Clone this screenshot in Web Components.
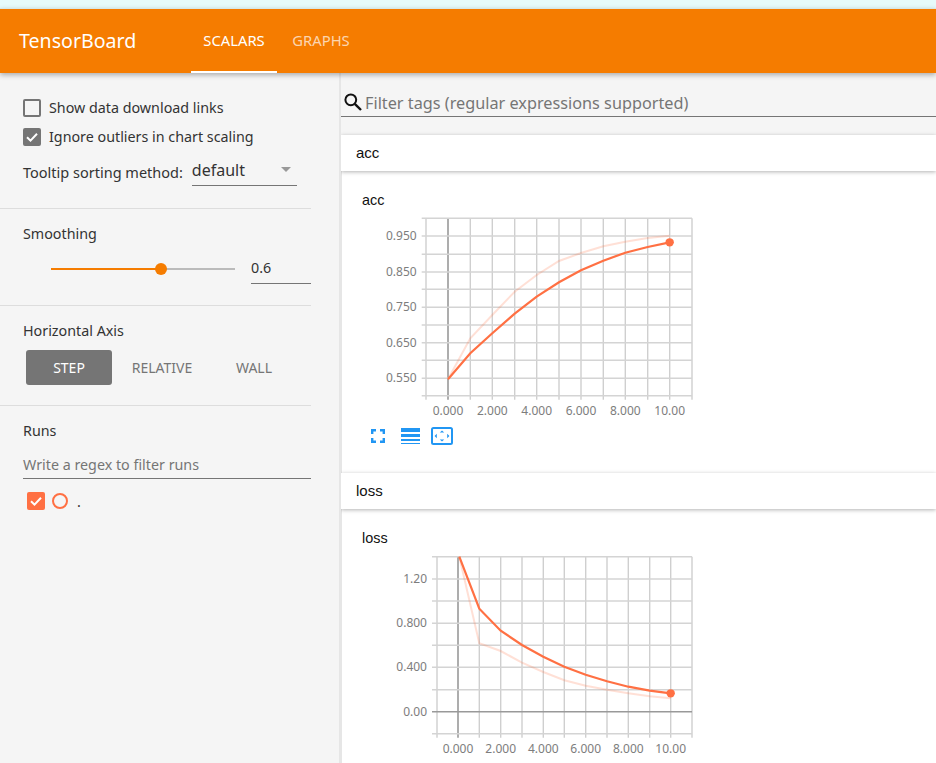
<!DOCTYPE html>
<html><head><meta charset="utf-8">
<style>
html,body{margin:0;padding:0;height:100%;overflow:hidden;background:#f5f5f5}
body{font-family:"Noto Sans","Noto Sans CJK SC",sans-serif;color:#333}
</style></head><body>
<tb-app></tb-app>
<template id="chart-t"><style>
:host{display:block;margin-top:3px}
svg{display:block;overflow:visible}
text{font:12px "Noto Sans",sans-serif;fill:#7d7d7d}
</style><div id="c"></div></template>
<script>
function def(name,html,init){
  customElements.define(name,class extends HTMLElement{
    constructor(){super();this.attachShadow({mode:'open'}).innerHTML=typeof html==='function'?html(this):html;}
    connectedCallback(){if(init)init(this);}
  });
}
def('tb-header',`<style>
:host{display:block;box-sizing:border-box;height:65px;background:#f57c00;color:#fff;box-shadow:0 2px 5px rgba(0,0,0,.3);position:relative;z-index:3;border-top:1px solid #d8e8e6}
.w{display:flex;height:64px;align-items:stretch;padding-left:19px}
.t{font-size:19.6px;line-height:63px;width:172px}
a{font-size:14.8px;line-height:63px;box-sizing:border-box;text-align:center;width:86px}
a.on{border-bottom:2px solid #fff}
a.off{color:rgba(255,255,255,.7);width:88px}
</style><div class="w"><div class="t">TensorBoard</div><a class="on">SCALARS</a><a class="off">GRAPHS</a></div>`);
def('tb-check',h=>`<style>
:host{display:flex;align-items:center;height:29px;font-size:14.3px;color:#333}
.b{box-sizing:border-box;width:18px;height:18px;border:2px solid #757575;border-radius:2px;margin-right:8px;display:flex;align-items:center;justify-content:center}
:host([checked]) .b{background:#757575}
svg{width:14px;height:14px}
</style><span class="b">${h.hasAttribute('checked')?'<svg viewBox="0 0 14 14"><path d="M2 7.2 5.5 10.6 12 3.8" fill="none" stroke="#fff" stroke-width="2"/></svg>':''}</span><slot></slot>`);
def('tb-sidebar',`<style>
:host{display:block;width:341px;flex:none;box-sizing:border-box;border-right:2px solid #e6e6e6;height:100%;font-size:14.3px}
section{margin-right:28px;border-bottom:1px solid #ddd;padding-left:23px;box-sizing:border-box}
.s1{height:136px;padding-top:20px}
.s2{height:97px;padding-top:15px}
.s3{height:100px;padding-top:15px}
.s4{border:none;padding-top:15px}
.sel{display:flex;align-items:center;margin-top:5px;height:32px;font-size:14.5px}
.dd{margin-left:9px;width:105px;height:27px;border-bottom:1px solid #757575;font-size:16px;display:flex;justify-content:space-between;align-items:center;box-sizing:border-box;padding:0 6px 4px 0;position:relative;color:#333}
.dd i{border:5px solid transparent;border-top:5px solid #999;border-bottom:0;width:0;height:0}
.t{line-height:20px}
.sl{display:flex;align-items:center;margin-top:11px;height:28px;padding-left:28px}
.track{position:relative;width:184px;height:2px;background:#bbb;margin-right:16px}
.track b{position:absolute;left:0;top:0;width:110px;height:2px;background:#f57c00}
.track u{position:absolute;left:104px;top:-5px;width:12px;height:12px;border-radius:50%;background:#f57c00}
.val{flex:1;height:28px;line-height:24px;border-bottom:1px solid #757575;box-sizing:border-box;color:#333;position:relative;top:1px}
.btns{display:flex;margin:9px 0 0 3px}
.btns span{width:86px;height:35px;line-height:35px;text-align:center;font-size:14px;color:#757575;border-radius:3px;margin-right:7px}
.btns span:last-child{margin-left:-1px}
.btns .on{background:#757575;color:#fff}
.filt{margin-top:12px;height:26px;line-height:24px;border-bottom:1px solid #757575;box-sizing:border-box;color:#757575}
.run{display:flex;align-items:center;margin-top:8px;padding-left:4px;height:28px;color:#333}
.cb{width:18px;height:18px;background:#ff7043;border-radius:2px;display:flex;align-items:center;justify-content:center}
.cb svg{width:14px;height:14px}
.r{box-sizing:border-box;width:16px;height:16px;border:2px solid #ff7043;border-radius:50%;margin:0 9px 0 7px}
</style>
<section class="s1"><tb-check>Show data download links</tb-check><tb-check checked>Ignore outliers in chart scaling</tb-check>
<div class="sel"><span>Tooltip sorting method:</span><div class="dd">default<i></i></div></div></section>
<section class="s2"><div class="t">Smoothing</div><div class="sl"><div class="track"><b></b><u></u></div><div class="val">0.6</div></div></section>
<section class="s3"><div class="t">Horizontal Axis</div><div class="btns"><span class="on">STEP</span><span>RELATIVE</span><span>WALL</span></div></section>
<section class="s4"><div class="t">Runs</div><div class="filt">Write a regex to filter runs</div>
<div class="run"><span class="cb"><svg viewBox="0 0 14 14"><path d="M2 7.2 5.5 10.6 12 3.8" fill="none" stroke="#fff" stroke-width="2"/></svg></span><span class="r"></span>.</div></section>`);
def('tb-search',`<style>
:host{display:flex;align-items:center;height:29px;margin:15px 0 18px;border-bottom:1px solid #757575;box-sizing:border-box;font-size:16.25px;color:#757575}
svg{width:20px;height:20px;margin:0 2px 0 2px}
span{padding-top:1px}
</style><svg viewBox="0 0 20 20"><circle cx="7.8" cy="7.8" r="5.4" fill="none" stroke="#111" stroke-width="2"/><path d="M11.8 11.8 18 18" stroke="#111" stroke-width="2.4"/></svg><span>Filter tags (regular expressions supported)</span>`);
def('tb-card',h=>`<style>
:host{display:block;background:#fff;border-left:2px solid #e6e6e6;margin-left:-1px}
.h{height:36px;margin-left:-1px;background:#fff;padding-left:15px;font:15px/36px "Liberation Sans",sans-serif;color:#111;box-shadow:0 1px 4px rgba(0,0,0,.3);position:relative}
.b{height:${h.getAttribute('bh')}px;padding:20px 0 0 20px;box-sizing:border-box}
.n{font:14.4px/18px "Liberation Sans",sans-serif;color:#111}
</style><div class="h">${h.getAttribute('name')}</div><div class="b"><div class="n">${h.getAttribute('name')}</div><slot></slot></div>`);
const CH={
 acc:{Y:212,l:421.7,r:692,t:218.3,b:395.7,
  vx:[426,448,470.3,492.3,514.7,536.7,559,581,603.3,625.3,647.7,669.7,692],
  hy:[218.3,236,254.3,272,289.3,307.3,325,342.7,360.3,378.3,395.7],
  heavyV:[448],heavyH:[],
  ox:340,oy:190,
  sm:[[324,568],[391,490],[457,430],[524,371],[590,320],[657,277],[723,241],[790,212],[856,188],[923,171],[989,157]],
  raw:[[324,568],[391,445],[457,375],[524,305],[590,255],[657,213],[723,189],[790,169],[856,155],[923,144],[989,137]],
  yl:[['0.950',236],['0.850',272],['0.750',307.3],['0.650',342.7],['0.550',378.3]],
  xl:[[448,'0.000'],[492.3,'2.000'],[536.7,'4.000'],[581,'6.000'],[625.3,'8.000'],[669.7,'10.00']],
  labelY:411},
 loss:{Y:550,l:432,r:692,t:556.7,b:733.7,
  vx:[437,458,479.3,500.7,522,543.3,564.3,585.7,607,628.3,649.7,670.7,692],
  hy:[556.7,579,601,623.3,645.3,667.3,689.7,711.7,733.7],
  heavyV:[458],heavyH:[711.7],
  ox:340,oy:520,
  sm:[[358,110],[418,266],[482,332],[546,375],[610,410],[673,440],[737,464],[801,484],[865,500],[929,512],[992,520]],
  raw:[[358,110],[418,370],[482,393],[546,428],[610,456],[673,481],[737,497],[801,509],[865,520],[929,529],[992,535]],
  yl:[['1.20',579],['0.800',623.3],['0.400',667.3],['0.00',711.7]],
  xl:[[458,'0.000'],[500.7,'2.000'],[543.3,'4.000'],[585.7,'6.000'],[628.3,'8.000'],[670.7,'10.00']],
  labelY:749}
};
class TbChart extends HTMLElement{
  constructor(){super();this.attachShadow({mode:'open'}).appendChild(document.getElementById('chart-t').content.cloneNode(true));}
  connectedCallback(){
    const d=CH[this.getAttribute('data')];
    const X=362,Y=d.Y;
    const pts=a=>a.map(p=>(d.ox+p[0]/3-X).toFixed(1)+','+(d.oy+p[1]/3-Y).toFixed(1)).join(' ');
    let s='';
    d.vx.forEach((x,i)=>{const h=d.heavyV.includes(x);s+=`<line x1="${x-X}" x2="${x-X}" y1="${d.t-Y}" y2="${d.b-Y+4}" stroke="${h?'#999':'#cfcfcf'}" stroke-width="${h?1.6:1.4}"/>`});
    d.hy.forEach((y,i)=>{const h=d.heavyH.includes(y);s+=`<line x1="${d.l-X}" x2="${d.r-X}" y1="${y-Y}" y2="${y-Y}" stroke="${h?'#999':'#d4d4d4'}" stroke-width="${h?1.6:1.4}"/>`});
    d.yl.forEach(a=>{s+=`<text x="${d.l-5-X}" y="${a[1]-Y+4}" text-anchor="end">${a[0]}</text>`});
    d.xl.forEach(a=>{s+=`<text x="${a[0]-X}" y="${d.labelY-Y+4}" text-anchor="middle">${a[1]}</text>`});
    s+=`<polyline points="${pts(d.raw)}" fill="none" stroke="#ff7043" stroke-opacity=".22" stroke-width="2"/>`;
    s+=`<polyline points="${pts(d.sm)}" fill="none" stroke="#ff7043" stroke-width="2.2"/>`;
    const e=d.sm[d.sm.length-1];
    s+=`<circle cx="${d.ox+e[0]/3-X}" cy="${d.oy+e[1]/3-Y}" r="4.2" fill="#ff7043"/>`;
    this.shadowRoot.getElementById('c').innerHTML=`<svg width="340" height="${d.b-Y+24}">${s}</svg>`;
  }
}
customElements.define('tb-chart',TbChart);
def('tb-icons',`<style>
:host{display:flex;align-items:center;height:20px;margin-top:6px;padding-left:9px}
svg{display:block;fill:none}
</style>
<svg width="14" height="14" viewBox="0 0 14 14" stroke="#2196f3" stroke-width="2.4" style="margin-right:16px"><path d="M1.2 5V1.2H5M9 1.2H12.8V5M12.8 9V12.8H9M5 12.8H1.2V9"/></svg>
<svg width="19" height="16" viewBox="0 0 19 16" style="margin-right:11px"><rect width="19" height="4" fill="#2196f3"/><rect y="6" width="19" height="3" fill="#2196f3"/><rect y="11" width="19" height="2" fill="#2196f3"/><rect y="15" width="19" height="1" fill="#2196f3"/></svg>
<svg width="22" height="18" viewBox="0 0 22 18"><rect x="1" y="1" width="20" height="16" rx="1.5" stroke="#2196f3" stroke-width="2"/><path d="M11 3.4 8.8 5.6h4.4zM11 14.6l-2.2-2.2h4.4zM3.6 9l2.2-2.2v4.4zM18.4 9l-2.2-2.2v4.4z" fill="#2196f3"/></svg>`);
def('tb-app',`<style>
:host{display:block;height:763px;overflow:hidden}
.top{height:8px;background:#e6fbfb}
.m{display:flex;height:690px}
main{flex:1;min-width:0;overflow:hidden}
</style>
<div class="top"></div><tb-header></tb-header>
<div class="m"><tb-sidebar></tb-sidebar><main>
<tb-search></tb-search>
<tb-card name="acc" bh="302"><tb-chart data="acc"></tb-chart><tb-icons></tb-icons></tb-card>
<tb-card name="loss" bh="300"><tb-chart data="loss"></tb-chart></tb-card>
</main></div>`);
</script>
</body></html>
